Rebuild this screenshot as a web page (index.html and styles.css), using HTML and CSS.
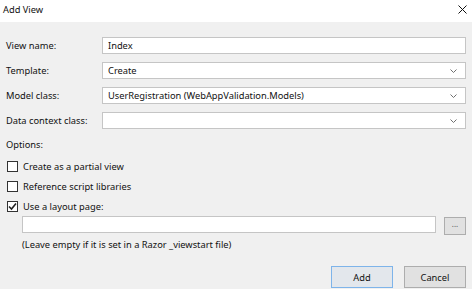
FILE: index.html
```html
<!DOCTYPE html>
<html>
<head>
<meta charset="utf-8">
<link rel="stylesheet" href="styles.css">
</head>
<body>
<div class="dialog">
  <div class="titlebar">
    <span class="title">Add View</span>
    <svg class="close" width="9" height="9" viewBox="0 0 9 9"><path d="M0.5 0.5 L8.5 8.5 M8.5 0.5 L0.5 8.5" stroke="#111" stroke-width="1" fill="none"/></svg>
  </div>
  <div class="content">
    <div class="form">
      <label class="lbl">View name:</label>
      <div class="field">Index</div>
      <label class="lbl">Template:</label>
      <div class="field select">Create<svg class="chev" width="7" height="4" viewBox="0 0 7 4"><path d="M0.5 0.5 L3.5 3.5 L6.5 0.5" stroke="#707070" fill="none"/></svg></div>
      <label class="lbl">Model class:</label>
      <div class="field select">UserRegistration (WebAppValidation.Models)<svg class="chev" width="7" height="4" viewBox="0 0 7 4"><path d="M0.5 0.5 L3.5 3.5 L6.5 0.5" stroke="#707070" fill="none"/></svg></div>
      <label class="lbl">Data context class:</label>
      <div class="field select"><svg class="chev" width="7" height="4" viewBox="0 0 7 4"><path d="M0.5 0.5 L3.5 3.5 L6.5 0.5" stroke="#707070" fill="none"/></svg></div>
    </div>
    <div class="options">
      <div class="opt-label">Options:</div>
      <div class="check"><span class="box"></span><span>Create as a partial view</span></div>
      <div class="check"><span class="box"></span><span>Reference script libraries</span></div>
      <div class="check"><span class="box checked"><svg width="9" height="9" viewBox="0 0 9 9"><path d="M1 4.5 L3.5 7 L8 1.5" stroke="#222" stroke-width="1.6" fill="none"/></svg></span><span>Use a layout page:</span></div>
      <div class="layout-row">
        <div class="field layout-field"></div>
        <div class="browse">...</div>
      </div>
      <div class="hint">(Leave empty if it is set in a Razor _viewstart file)</div>
    </div>
    <div class="buttons">
      <div class="btn default">Add</div>
      <div class="btn">Cancel</div>
    </div>
  </div>
</div>
</body>
</html>
```

FILE: styles.css
```css
* { box-sizing: border-box; }
html, body { margin: 0; padding: 0; background: #fff; }
body {
  font-family: "Noto Sans", "Open Sans", sans-serif;
  font-size: 9.3px;
  color: #111;
}
.dialog {
  width: 472px;
  height: 289px;
  background: #f0f0f0;
  display: flex;
  flex-direction: column;
}
.titlebar {
  height: 22px;
  background: #fff;
  display: flex;
  align-items: center;
  justify-content: space-between;
  padding: 0 5px 0 3px;
}
.title { line-height: 14px; margin-top: -2px; }
.close { margin-top: -3px; }
.content {
  flex: 1;
  padding: 15px 6px 0 6px;
  display: flex;
  flex-direction: column;
}
.form {
  display: grid;
  grid-template-columns: 96px 1fr;
  grid-auto-rows: 17px;
  row-gap: 8px;
  align-items: center;
}
.lbl { line-height: 14px; }
.field {
  height: 17px;
  background: #fff;
  border: 1px solid #c5c5c5;
  padding: 0 5px;
  line-height: 15px;
  display: flex;
  align-items: center;
}
.select .chev { margin-left: auto; margin-right: 3px; }
.options { margin-top: 9px; }
.opt-label { line-height: 14px; margin-bottom: 4px; }
.check {
  height: 20px;
  display: flex;
  align-items: center;
  gap: 5px;
  margin-left: 1px;
}
.box {
  width: 11px;
  height: 11px;
  border: 1px solid #333;
  background: #fff;
  display: flex;
  align-items: center;
  justify-content: center;
}
.layout-row {
  display: flex;
  align-items: flex-start;
  margin-left: 16px;
  gap: 8px;
}
.layout-field { width: 414px; }
.browse {
  width: 22px;
  height: 18px;
  margin-top: 1px;
  background: #e1e1e1;
  border: 1px solid #adadad;
  font-size: 8px;
  line-height: 12px;
  text-align: center;
  color: #555;
}
.hint {
  margin-left: 16px;
  line-height: 14px;
  margin-top: 3px;
}
.buttons {
  margin-top: 14px;
  display: flex;
  justify-content: flex-end;
  gap: 11px;
}
.btn {
  width: 62px;
  height: 22px;
  background: #e1e1e1;
  border: 1px solid #adadad;
  display: flex;
  align-items: center;
  justify-content: center;
}
.btn.default { border-color: #7eb4ea; background: #e3e7ec; }
```
